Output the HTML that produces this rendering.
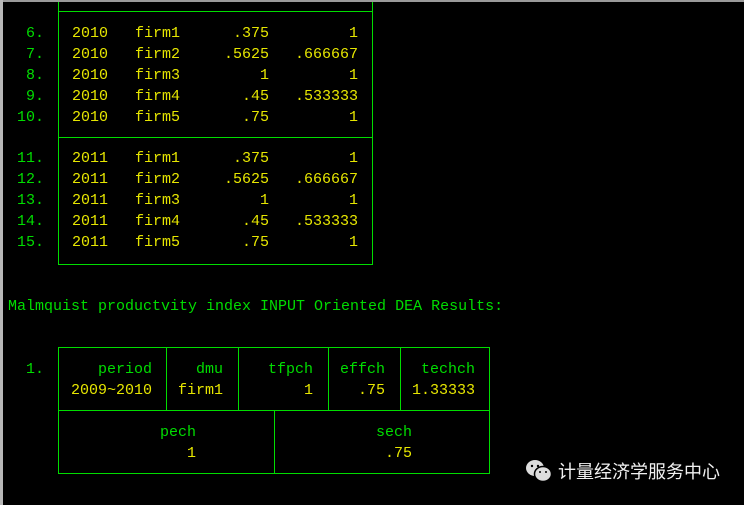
<!DOCTYPE html><html><head><style>
body{margin:0;width:744px;height:505px;background:#000;position:relative;overflow:hidden;font-family:"Liberation Mono",monospace;font-size:15px}
.t{position:absolute;height:20px;line-height:20px;white-space:pre}
.g{color:#00dd00}.y{color:#e6e600}
.r{text-align:right}
.h{position:absolute;height:1px;background:#00dd00}
.v{position:absolute;width:1px;background:#00dd00}
</style></head><body>
<div style="position:absolute;left:0;top:0;width:744px;height:2px;background:#9a9a9a"></div>
<div style="position:absolute;left:0;top:0;width:3px;height:505px;background:#b8b8b8"></div>
<div class="v" style="left:58px;top:2px;height:262px"></div>
<div class="v" style="left:372px;top:2px;height:262px"></div>
<div class="h" style="left:58px;top:11px;width:315px"></div>
<div class="h" style="left:58px;top:137px;width:315px"></div>
<div class="h" style="left:58px;top:264px;width:315px"></div>
<div id="rows"></div>
<div class="t g" style="left:8px;top:297px">Malmquist productvity index INPUT Oriented DEA Results:</div>
<div class="h" style="left:58px;top:347px;width:432px"></div>
<div class="h" style="left:58px;top:410px;width:432px"></div>
<div class="h" style="left:58px;top:473px;width:432px"></div>
<div class="v" style="left:58px;top:347px;height:127px"></div>
<div class="v" style="left:489px;top:347px;height:127px"></div>
<div class="v" style="left:166px;top:347px;height:63px"></div>
<div class="v" style="left:238px;top:347px;height:63px"></div>
<div class="v" style="left:328px;top:347px;height:63px"></div>
<div class="v" style="left:400px;top:347px;height:63px"></div>
<div class="v" style="left:274px;top:410px;height:63px"></div>
<div class="t g r" style="right:700px;top:360px">1.</div>
<div class="t g r" style="right:592px;top:360px">period</div>
<div class="t y r" style="right:592px;top:381px">2009~2010</div>
<div class="t g r" style="right:521px;top:360px">dmu</div>
<div class="t y r" style="right:521px;top:381px">firm1</div>
<div class="t g r" style="right:431px;top:360px">tfpch</div>
<div class="t y r" style="right:431px;top:381px">1</div>
<div class="t g r" style="right:359px;top:360px">effch</div>
<div class="t y r" style="right:359px;top:381px">.75</div>
<div class="t g r" style="right:269px;top:360px">techch</div>
<div class="t y r" style="right:269px;top:381px">1.33333</div>
<div class="t g r" style="right:548px;top:423px">pech</div>
<div class="t y r" style="right:548px;top:444px">1</div>
<div class="t g r" style="right:332px;top:423px">sech</div>
<div class="t y r" style="right:332px;top:444px">.75</div>
<svg style="position:absolute;left:524px;top:458px" width="30" height="26" viewBox="0 0 30 26">
<ellipse cx="11" cy="10" rx="9" ry="8" fill="#ddd"/>
<ellipse cx="19" cy="16" rx="8.5" ry="7.5" fill="#ddd" stroke="#000" stroke-width="1.5"/>
<circle cx="8" cy="8" r="1.2" fill="#000"/><circle cx="14" cy="8" r="1.2" fill="#000"/>
<circle cx="16" cy="14" r="1" fill="#000"/><circle cx="22" cy="14" r="1" fill="#000"/>
</svg>
<div style="position:absolute;left:558px;top:460px;color:#f0f0f0;font-family:'Liberation Sans','Noto Sans CJK SC',sans-serif;font-size:18px;line-height:24px">计量经济学服务中心</div>
<script>
var d=[["6.","2010","firm1",".375","1"],["7.","2010","firm2",".5625",".666667"],["8.","2010","firm3","1","1"],["9.","2010","firm4",".45",".533333"],["10.","2010","firm5",".75","1"],["11.","2011","firm1",".375","1"],["12.","2011","firm2",".5625",".666667"],["13.","2011","firm3","1","1"],["14.","2011","firm4",".45",".533333"],["15.","2011","firm5",".75","1"]];
var h="";d.forEach(function(r,i){var y=(i<5?33+21*i:158+21*(i-5))-9;
h+='<div class="t g r" style="right:700px;top:'+y+'px">'+r[0]+'</div>'+
'<div class="t y" style="left:72px;top:'+y+'px">'+r[1]+'</div>'+
'<div class="t y" style="left:135px;top:'+y+'px">'+r[2]+'</div>'+
'<div class="t y r" style="right:475px;top:'+y+'px">'+r[3]+'</div>'+
'<div class="t y r" style="right:386px;top:'+y+'px">'+r[4]+'</div>';});
document.getElementById("rows").innerHTML=h;
</script>
</body></html>
